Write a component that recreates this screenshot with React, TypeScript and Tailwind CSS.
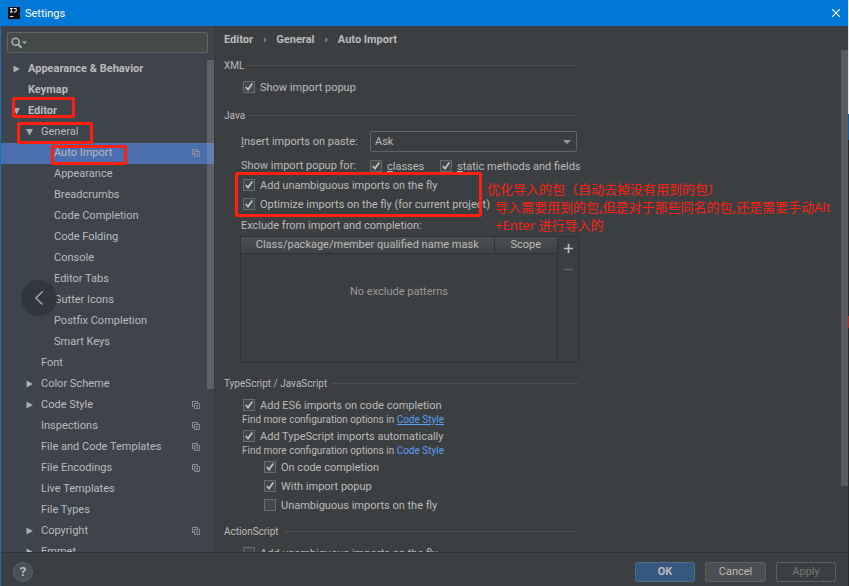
import type { ReactNode } from "react";

type Item = {
  label: string;
  level: 0 | 1 | 2;
  arrow?: "right" | "down";
  bold?: boolean;
  copy?: boolean;
  selected?: boolean;
};

const items: Item[] = [
  { label: "Appearance & Behavior", level: 0, arrow: "right", bold: true },
  { label: "Keymap", level: 0, bold: true },
  { label: "Editor", level: 0, arrow: "down", bold: true },
  { label: "General", level: 1, arrow: "down" },
  { label: "Auto Import", level: 2, copy: true, selected: true },
  { label: "Appearance", level: 2 },
  { label: "Breadcrumbs", level: 2 },
  { label: "Code Completion", level: 2 },
  { label: "Code Folding", level: 2 },
  { label: "Console", level: 2 },
  { label: "Editor Tabs", level: 2 },
  { label: "Gutter Icons", level: 2 },
  { label: "Postfix Completion", level: 2 },
  { label: "Smart Keys", level: 2 },
  { label: "Font", level: 1 },
  { label: "Color Scheme", level: 1, arrow: "right" },
  { label: "Code Style", level: 1, arrow: "right", copy: true },
  { label: "Inspections", level: 1, copy: true },
  { label: "File and Code Templates", level: 1, copy: true },
  { label: "File Encodings", level: 1, copy: true },
  { label: "Live Templates", level: 1 },
  { label: "File Types", level: 1 },
  { label: "Copyright", level: 1, arrow: "right", copy: true },
  { label: "Emmet", level: 1, arrow: "right" },
];

const indent = ["pl-[11px]", "pl-6", "pl-[37px]"];

function Arrow({ kind }: { kind?: "right" | "down" }) {
  return (
    <svg className="h-2 w-2 shrink-0" viewBox="0 0 8 8" fill="#adadad" aria-hidden="true">
      {kind === "right" && <path d="M1.500 0.5 L8 4 L1.500 7.5Z" />}
      {kind === "down" && <path d="M1 1 H8 L4.500 7.5Z" />}
    </svg>
  );
}

function CopyIcon() {
  return (
    <svg className="mr-[14px] h-2 w-2 shrink-0" viewBox="0 0 8 8" fill="none" stroke="#8b929c" aria-hidden="true">
      <path d="M2 5.5H0.5V0.5H5.5V2" />
      <path d="M2.5 2.5H7.5V7.5H2.5Z M4 4.5H6 M4 6H6" strokeWidth="0.9" />
    </svg>
  );
}

function Check({ children, checked = true }: { children: ReactNode; checked?: boolean }) {
  return (
    <label className="flex h-[19px] items-center gap-[5px] whitespace-nowrap">
      <span className="grid shrink-0">
        <input
          type="checkbox"
          defaultChecked={checked}
          className="peer col-start-1 row-start-1 size-3 appearance-none border border-[#6b6b6b] bg-[#43494a]"
        />
        <svg
          className="pointer-events-none invisible col-start-1 row-start-1 size-3 peer-checked:visible"
          viewBox="0 0 12 12"
          fill="none"
          stroke="#c3c3c3"
          strokeWidth="1.7"
          aria-hidden="true"
        >
          <path d="M2.8 6 L5 8.6 L9.3 2.6" />
        </svg>
      </span>
      <span className="pt-0.5">{children}</span>
    </label>
  );
}

function Title({ children }: { children: ReactNode }) {
  return (
    <h2 className="flex h-5 items-center gap-[5px] pl-px text-[10px]">
      <span className="pt-0.5">{children}</span>
      <span className="h-px flex-1 bg-[#515151]" />
    </h2>
  );
}

function Find({ underline }: { underline?: boolean }) {
  return (
    <p className="h-3 pl-[19px] text-[10px] leading-3 whitespace-nowrap">
      Find more configuration options in{" "}
      <a href="#code-style" className={underline ? "text-[#589df6] underline" : "text-[#589df6]"}>
        Code Style
      </a>
    </p>
  );
}

export default function App() {
  return (
    <div className="relative flex h-screen overflow-hidden bg-[#3c3f41] font-['Roboto',sans-serif] text-[11px] leading-4 text-[#bbbbbb]">
      <div className="flex min-w-0 flex-1 flex-col">
        <header className="flex h-[26px] shrink-0 items-center bg-[#0078d7] pr-[7px] pl-2 text-white">
          <svg className="size-3" viewBox="0 0 12 12" aria-hidden="true">
            <rect width="12" height="12" fill="#0d0d12" />
            <path d="M2 1.5H4.6 M3.3 1.5V5 M2 5H4.6 M5.8 1.5H8.2V4.3Q8.2 5 7.4 5H5.8" stroke="#fff" fill="none" />
            <path d="M2 9.5H5.5" stroke="#ddd" />
          </svg>
          <h1 className="ml-[5px] flex-1 pt-px">Settings</h1>
          <button aria-label="Close" className="p-px">
            <svg className="size-2" viewBox="0 0 8 8" stroke="#fff" strokeWidth="1.1" aria-hidden="true">
              <path d="M0 0L8 8M8 0L0 8" />
            </svg>
          </button>
        </header>

        <div className="flex min-h-0 flex-1 border-l border-[#1a6fb8]">
          <div className="flex min-h-0 min-w-0 flex-1 flex-col">
            <div className="flex min-h-0 flex-1">
              <nav className="flex w-[213px] shrink-0 flex-col bg-[#3e434c]">
                <label className="mx-1.5 mt-1.5 flex h-[21px] shrink-0 items-center rounded-[2px] border border-[#646464] bg-[#45494a] pl-[3px]">
                  <svg className="h-3 w-4 shrink-0" viewBox="0 0 16 12" fill="none" stroke="#afb1b3" aria-hidden="true">
                    <circle cx="4.6" cy="4.8" r="3.5" strokeWidth="1.5" />
                    <path d="M7.2 7.4L10.5 10.8" strokeWidth="2" />
                    <path d="M11 4.5H16L13.500 7Z" fill="#afb1b3" stroke="none" />
                  </svg>
                  <input aria-label="Search settings" className="min-w-0 flex-1 bg-transparent outline-none" />
                </label>
                <div className="relative mt-1.5 min-h-0 flex-1 overflow-hidden">
                  <ul>
                    {items.map((it) => (
                      <li
                        key={it.label + it.level}
                        className={`flex h-[21px] items-center pb-0.5 ${indent[it.level]} ${it.selected ? "bg-[#4b6eaf]" : ""}`}
                      >
                        <Arrow kind={it.arrow} />
                        <span className={`flex-1 pt-px pl-2 ${it.bold ? "font-bold" : ""}`}>{it.label}</span>
                        {it.copy && <CopyIcon />}
                      </li>
                    ))}
                  </ul>
                  <div className="absolute top-px right-0 h-[329px] w-[7px] bg-[#a6a6a6]/30" />
                </div>
              </nav>

              <main className="flex min-w-0 flex-1 border-l border-[#36393b]">
                <div className="flex min-w-0 flex-1 flex-col overflow-hidden pl-2">
                  <div className="mt-1.5 flex h-4 shrink-0 items-center gap-[10px] pl-px font-bold">
                    <span>Editor</span>
                    <span className="font-normal">›</span>
                    <span>General</span>
                    <span className="font-normal">›</span>
                    <span>Auto Import</span>
                  </div>

                  <div className="mt-[7px] w-full max-w-[355px]">
                    <Title>XML</Title>
                    <div className="mt-0.5 pl-5">
                      <Check>Show import popup</Check>
                    </div>

                    <div className="mt-[9px]">
                      <Title>Java</Title>
                    </div>
                    <div className="mt-1.5 flex items-center pr-px pl-[18px]">
                      <label htmlFor="paste" className="w-[129px] shrink-0">
                        <u>I</u>nsert imports on paste:
                      </label>
                      <div className="grid flex-1 items-center">
                        <select
                          id="paste"
                          className="col-start-1 row-start-1 h-[21px] appearance-none rounded-[2px] border border-[#646464] pl-1"
                        >
                          <option>Ask</option>
                        </select>
                        <svg
                          className="pointer-events-none col-start-1 row-start-1 mr-1.5 h-1 w-2 justify-self-end"
                          viewBox="0 0 8 4"
                          fill="#9a9da0"
                          aria-hidden="true"
                        >
                          <path d="M0 0H8L4 4Z" />
                        </svg>
                      </div>
                    </div>
                    <div className="mt-1 flex items-center pl-[18px]">
                      <span className="w-[129px] shrink-0 pt-px">Show import popup for:</span>
                      <span className="w-[70px] shrink-0">
                        <Check>
                          <u>c</u>lasses
                        </Check>
                      </span>
                      <Check>
                        <u>s</u>tatic methods and fields
                      </Check>
                    </div>
                    <div className="pl-5">
                      <Check>Add unambiguous imports on the fly</Check>
                      <Check>Optimize imports on the fly (for current project)</Check>
                    </div>
                    <p className="mt-[5px] pl-[18px]">Exclude from import and completion:</p>

                    <div className="-mr-px mt-0.5 ml-[17px] flex h-[127px] border border-[#323232]">
                      <div className="flex-1">
                        <table className="w-full table-fixed border-collapse">
                          <thead>
                            <tr className="h-4 border-b border-[#323232] bg-linear-to-b from-[#4b4f51] to-[#3f4244]">
                              <th className="border-r border-[#323232] p-0 font-normal">
                                Class/package/member qualified name mask
                              </th>
                              <th className="w-[63px] p-0 font-normal">Scope</th>
                            </tr>
                          </thead>
                          <tbody>
                            <tr className="h-[77px]">
                              <td colSpan={2} className="p-0 text-center text-[#9a9a9a]">
                                No exclude patterns
                              </td>
                            </tr>
                          </tbody>
                        </table>
                      </div>
                      <div className="flex w-[21px] flex-col items-center gap-3 border-l border-[#323232] pt-[7px]">
                        <button aria-label="Add">
                          <svg className="block size-[9px]" viewBox="0 0 9 9" stroke="#c0c0c0" strokeWidth="1.6" aria-hidden="true">
                            <path d="M0 4.5H9M4.500 0V9" />
                          </svg>
                        </button>
                        <button aria-label="Remove" disabled>
                          <svg className="block size-[9px]" viewBox="0 0 9 9" stroke="#66686a" strokeWidth="1.4" aria-hidden="true">
                            <path d="M0 4.500H9" />
                          </svg>
                        </button>
                      </div>
                    </div>

                    <div className="mt-[10px]">
                      <Title>TypeScript / JavaScript</Title>
                    </div>
                    <div className="mt-0.5 pl-5">
                      <Check>Add ES6 imports on code completion</Check>
                    </div>
                    <Find underline />
                    <div className="pl-5">
                      <Check>Add TypeScript imports automatically</Check>
                    </div>
                    <Find />
                    <div className="pl-[41px]">
                      <Check>On code completion</Check>
                      <Check>With import popup</Check>
                      <Check checked={false}>Unambiguous imports on the fly</Check>
                    </div>

                    <div className="mt-[7px]">
                      <Title>ActionScript</Title>
                    </div>
                    <div className="mt-0.5 pl-5">
                      <Check checked={false}>Add unambiguous imports on the fly</Check>
                    </div>
                  </div>
                </div>
                <div className="mt-6 h-[436px] w-[7px] bg-[#595b5d]" />
              </main>
            </div>

            <footer className="flex h-[34px] shrink-0 items-center gap-[10px] border-t border-[#2f3133] pt-1 pr-3 pl-3">
              <button
                aria-label="Help"
                className="mr-auto size-5 rounded-full border border-[#5e6162] bg-[#4c5052] text-[13px] leading-[18px] font-bold"
              >
                ?
              </button>
              <button className="h-5 w-[60px] rounded-[2px] border border-[#4c708c] bg-[#365880] pt-px font-bold">OK</button>
              <button className="h-5 w-[61px] rounded-[2px] border border-[#5e6060] bg-[#4c5052] pt-px">Cancel</button>
              <button disabled className="h-5 w-[60px] rounded-[2px] border border-[#5e6060] pt-px text-[#777777]">
                Apply
              </button>
            </footer>
          </div>
        </div>
      </div>

      <div className="flex w-px flex-col bg-[#2b2b2b]">
        <div className="h-[114px] bg-[#e4e4e4]" />
        <div className="h-[26px] bg-[#0b62a8]" />
        <div className="mt-[176px] h-3 bg-[#c4201a]" />
      </div>

      <div className="pointer-events-none absolute inset-0 font-['Noto_Sans','Noto_Sans_CJK_SC',sans-serif] text-[13px] leading-[18px] text-[#ff2010]">
        <div className="absolute top-[97px] left-3 h-[21px] w-[63px] rounded-[2px] border-[3px] border-[#ff2010]" />
        <div className="absolute top-[122px] left-[17px] h-[22px] w-[76px] rounded-[2px] border-[3px] border-[#ff2010]" />
        <div className="absolute top-[145px] left-[51px] h-5 w-[76px] rounded-[2px] border-[3px] border-[#ff2010]" />
        <div className="absolute top-[172px] left-[235px] h-[45px] w-[247px] rounded-[2px] border-[3px] border-[#ff2010]" />
        <p className="absolute top-[180px] left-[487px] whitespace-nowrap">优化导入的包（自动去掉没有用到的包）</p>
        <p className="absolute top-[198px] left-[495px] whitespace-nowrap">
          导入需要用到的包,但是对于那些同名的包,还是需要手动Alt
          <br />
          +Enter 进行导入的
        </p>
        <div className="absolute top-[280px] left-[21px] flex size-9 items-center justify-center rounded-full bg-[#33363d]">
          <svg className="h-[14px] w-2" viewBox="0 0 8 14" fill="none" stroke="#b4b6ba" strokeWidth="1.2" aria-hidden="true">
            <path d="M7.500 0.500L0.800 7L7.500 13.500" />
          </svg>
        </div>
      </div>
    </div>
  );
}
